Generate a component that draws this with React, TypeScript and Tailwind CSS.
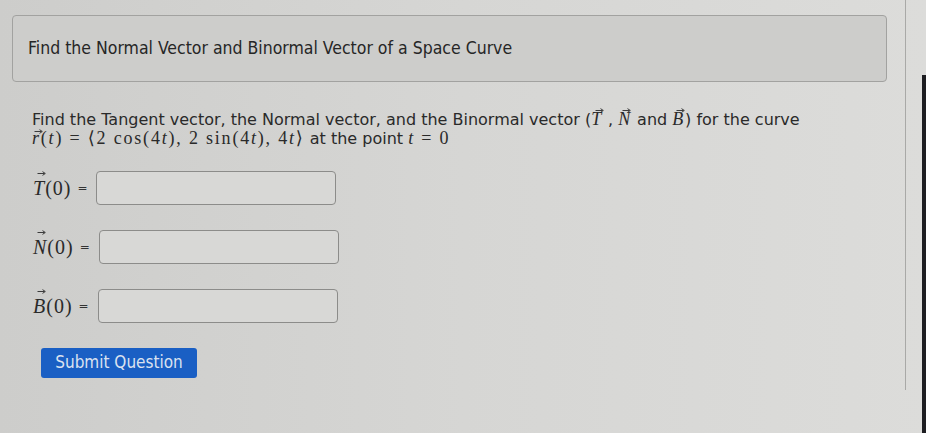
import React from "react";

const sans = { fontFamily: '"DejaVu Sans", Verdana, sans-serif' };
const cond = { fontFamily: '"DejaVu Sans Condensed", "DejaVu Sans", sans-serif' };

function Arrow({ className }: { className: string }) {
  return (
    <svg className={className} width="9" height="5" viewBox="0 0 9 5" fill="none">
      <path d="M0.5 2.5 H7.5" stroke="#2a2a2a" strokeWidth="0.9" />
      <path d="M5.5 0.6 L8.3 2.5 L5.5 4.4" stroke="#2a2a2a" strokeWidth="0.9" fill="none" />
    </svg>
  );
}

function Vec({ l, small }: { l: string; small?: boolean }) {
  return (
    <span className="relative inline-block italic">
      {l}
      <Arrow className={small ? "absolute left-[2px] top-[0px]" : "absolute left-[4px] top-[-2px]"} />
    </span>
  );
}

function Row({ v, mlBox }: { v: string; mlBox: string }) {
  return (
    <div className="flex items-center">
      <span className="font-['Liberation_Serif','DejaVu_Serif',serif] text-[20px] tracking-[1px] text-[#2a2a2a] pl-[1px]">
        <Vec l={v} />
        (0)
      </span>
      <span className="text-[12px] text-[#333] ml-[6px]" style={sans}>=</span>
      <div className={`${mlBox} w-[240px] h-[34px] rounded-[4px] border border-[#8c8c8a] bg-[#d8d8d6]`} />
    </div>
  );
}

const mathCls = "font-['Liberation_Serif','DejaVu_Serif',serif] text-[18px] tracking-[1.8px]";

export default function App() {
  return (
    <div className="w-[926px] h-[433px] overflow-hidden flex bg-gradient-to-r from-[#cdcdcb] via-[#d6d6d4] to-[#dcdcda]">
      <div className="w-[906px] h-[390px] shrink-0 border-r border-[#a9a9a7] pt-[15px] pl-[12px] pr-[18px]">
        <div className="h-[67px] rounded-[4px] border border-[#a2a2a0] bg-[#cdcdcb] flex items-center pl-[15px]">
          <span className="text-[17.5px] text-[#262626]" style={cond}>
            Find the Normal Vector and Binormal Vector of a Space Curve
          </span>
        </div>

        <div className="pl-[20px] pt-[28px] text-[#2a2a2a]">
          <div className="text-[16px] leading-[19px]" style={sans}>
            <div className="whitespace-nowrap">
              Find the Tangent vector, the Normal vector, and the Binormal vector (
              <span className={mathCls}>
                <Vec l="T" />
              </span>
              {" , "}
              <span className={mathCls}>
                <Vec l="N" />
              </span>
              {" and "}
              <span className={mathCls}>
                <Vec l="B" />
              </span>
              ) for the curve
            </div>
            <div className="whitespace-nowrap">
              <span className={mathCls}>
                <Vec l="r" small />
                (<i>t</i>) = ⟨2 cos(4<i>t</i>), 2 sin(4<i>t</i>), 4<i>t</i>⟩
              </span>{" "}
              at the point{" "}
              <span className={mathCls}>
                <i>t</i> = 0
              </span>
            </div>
          </div>

          <div className="mt-[23px] flex flex-col gap-[25px]">
            <Row v="T" mlBox="ml-[8px]" />
            <Row v="N" mlBox="ml-[9px]" />
            <Row v="B" mlBox="ml-[9px]" />
          </div>

          <button
            className="mt-[25px] ml-[9px] w-[156px] h-[30px] rounded-[3px] bg-[#1a5fc4] text-[#dbe2f0] text-[17px]"
            style={cond}
          >
            Submit Question
          </button>
        </div>
      </div>
      <div className="flex-1" />
      <div className="w-[4px] mt-[75px] bg-[#1e1e22]" />
    </div>
  );
}
